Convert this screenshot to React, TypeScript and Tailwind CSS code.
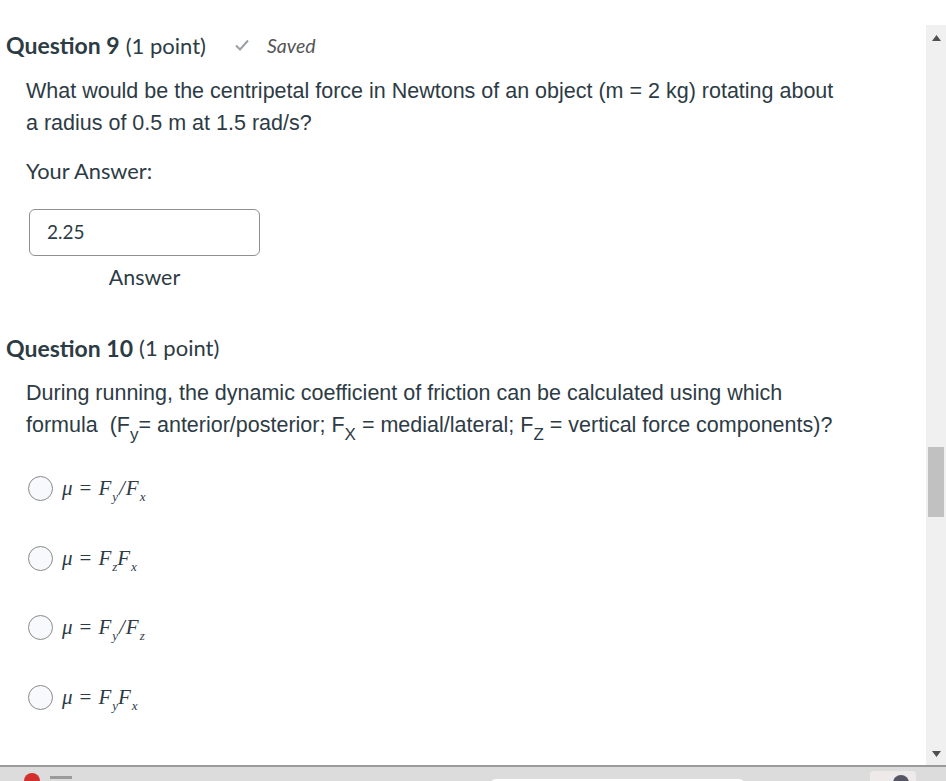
import React from "react";

const lato = { fontFamily: "Lato, 'Open Sans', sans-serif" };

function Radio({ children }: { children: React.ReactNode }) {
  return (
    <div className="flex items-center h-[25px]">
      <div className="w-[25px] h-[25px] rounded-full border-[1.5px] border-[#8a8a8a] bg-[#f8f9fc] shrink-0" />
      <div className="ml-[9px] text-[21px] text-[#2d3b45] font-['Liberation_Serif',serif] leading-none flex items-baseline">
        {children}
      </div>
    </div>
  );
}

const F = ({ s }: { s: string }) => (
  <span className="italic">
    F<sub className="text-[13px] align-[-3px] ml-[1px]">{s}</sub>
  </span>
);

const Eq = () => <span className="mx-[7px] not-italic">=</span>;
const Mu = () => <span className="italic">μ</span>;
const Sl = () => <span className="mx-[1px] italic">/</span>;

export default function App() {
  return (
    <div className="w-[946px] h-[781px] bg-white overflow-hidden flex flex-col">
      <div className="flex flex-1 min-h-0">
        <div className="flex-1 text-[#2d3b45]">
          <div className="pt-[28px] pl-[6px] flex items-center" style={lato}>
            <span className="text-[23px] font-bold text-[#2d3b45]">Question 9</span>
            <span className="text-[22px] ml-[6px]">(1 point)</span>
            <svg className="ml-[28px]" width="16" height="14" viewBox="0 0 16 14">
              <path d="M2 7.5 L6 11.5 L14 2.5" fill="none" stroke="#9aa0a6" strokeWidth="2" />
            </svg>
            <span className="ml-[17px] text-[19.5px] italic text-[#555]">Saved</span>
          </div>
          <div className="pl-[26px] pt-[12px] text-[21.5px] leading-[32px] font-['Liberation_Sans',Arial,sans-serif] text-[#2d3b45]">
            <div>What would be the centripetal force in Newtons of an object (m = 2 kg) rotating about</div>
            <div>a radius of 0.5 m at 1.5 rad/s?</div>
          </div>
          <div className="pl-[26px] pt-[17px] text-[21.8px] leading-[30px]" style={lato}>
            Your Answer:
          </div>
          <div className="pl-[29px] pt-[23px]" style={lato}>
            <div className="w-[231px] h-[47px] rounded-[6px] border border-[#8f8f8f] flex items-center pl-[17px] text-[19px]">
              2.25
            </div>
            <div className="w-[231px] text-center text-[21.4px] mt-[8px] leading-[26px]">Answer</div>
          </div>
          <div className="pt-[41px] pl-[6px] flex items-center" style={lato}>
            <span className="text-[23px] font-bold">Question 10</span>
            <span className="text-[22px] ml-[6px]">(1 point)</span>
          </div>
          <div className="pl-[26px] pt-[12px] text-[21.5px] leading-[32px] font-['Liberation_Sans',Arial,sans-serif] text-[#2d3b45]">
            <div>During running, the dynamic coefficient of friction can be calculated using which</div>
            <div>
              formula&nbsp; (F<sub className="text-[17px] align-[-4px]">y</sub>= anterior/posterior; F
              <sub className="text-[17px] align-[-4px]">X</sub> = medial/lateral; F
              <sub className="text-[17px] align-[-4px]">Z</sub> = vertical force components)?
            </div>
          </div>
          <div className="pl-[28px] pt-[35px] flex flex-col gap-[44.5px]">
            <Radio>
              <Mu />
              <Eq />
              <F s="y" />
              <Sl />
              <F s="x" />
            </Radio>
            <Radio>
              <Mu />
              <Eq />
              <F s="z" />
              <F s="x" />
            </Radio>
            <Radio>
              <Mu />
              <Eq />
              <F s="y" />
              <Sl />
              <F s="z" />
            </Radio>
            <Radio>
              <Mu />
              <Eq />
              <F s="y" />
              <F s="x" />
            </Radio>
          </div>
        </div>
        <div className="w-[20px] flex flex-col pt-[25px]">
          <div className="flex-1 bg-[#f0f0f0] flex flex-col items-center">
            <div className="h-[26px] flex items-center justify-center">
              <svg width="9" height="6" viewBox="0 0 9 6"><path d="M0 6 L4.5 0 L9 6 Z" fill="#505050" /></svg>
            </div>
            <div className="flex-1 w-full flex flex-col">
              <div className="h-[396px]" />
              <div className="h-[70px] mx-[2px] bg-[#c1c1c1]" />
              <div className="flex-1" />
            </div>
            <div className="h-[22px] flex items-center justify-center">
              <svg width="9" height="6" viewBox="0 0 9 6"><path d="M0 0 L9 0 L4.5 6 Z" fill="#505050" /></svg>
            </div>
          </div>
        </div>
      </div>
      <div className="h-[2px] bg-[#9a9a9a]" />
      <div className="h-[14px] bg-[#dcdcdc] relative overflow-hidden">
        <div className="absolute left-[24px] top-[6px] w-[16px] h-[16px] rounded-full bg-[#d32f2f]" />
        <div className="absolute left-[50px] top-[9px] w-[22px] h-[3px] bg-[#9a9a9a]" />
        <div className="absolute left-[490px] top-[12px] w-[255px] h-[10px] rounded-t-[6px] bg-white" />
        <div className="absolute left-[870px] top-[4px] w-[46px] h-[14px] rounded-[3px] bg-[#eeeaea]">
          <div className="absolute left-[23px] top-[4px] w-[16px] h-[16px] rounded-full bg-[#556]" />
        </div>
      </div>
    </div>
  );
}
